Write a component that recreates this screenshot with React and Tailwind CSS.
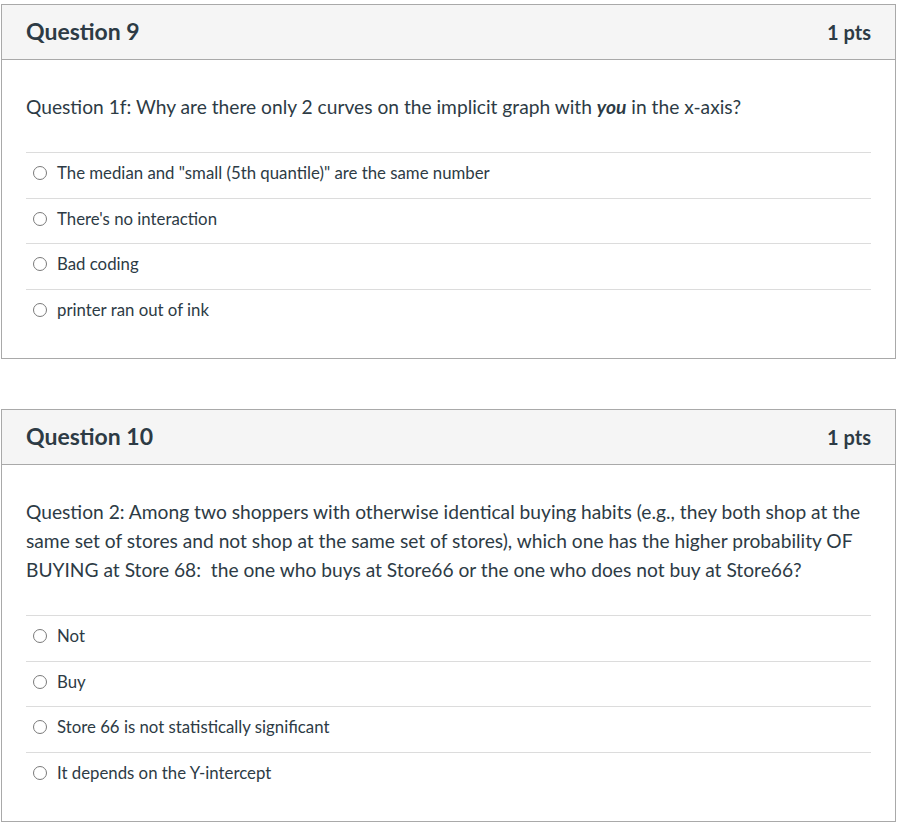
import React from "react";

const questions = [
  {
    title: "Question 9",
    pts: "1 pts",
    text: (
      <>
        Question 1f: Why are there only 2 curves on the implicit graph with{" "}
        <em className="font-bold">you</em> in the x-axis?
      </>
    ),
    answers: [
      'The median and "small (5th quantile)" are the same number',
      "There's no interaction",
      "Bad coding",
      "printer ran out of ink",
    ],
  },
  {
    title: "Question 10",
    pts: "1 pts",
    text: (
      <>
        Question 2: Among two shoppers with otherwise identical buying habits (e.g., they both shop at the
        same set of stores and not shop at the same set of stores), which one has the higher probability OF
        BUYING at Store 68:&nbsp; the one who buys at Store66 or the one who does not buy at Store66?
      </>
    ),
    answers: ["Not", "Buy", "Store 66 is not statistically significant", "It depends on the Y-intercept"],
  },
];

function Question({ q, className }) {
  return (
    <div className={"w-[895px] border border-[#a9a9a9] bg-white " + className}>
      <div className="h-[55px] pb-px px-6 flex items-center justify-between bg-[#f5f5f5] border-b border-[#a9a9a9]">
        <span className="text-[23px] font-bold">{q.title}</span>
        <span className="text-[20px] font-bold">{q.pts}</span>
      </div>
      <div className="px-6 pt-[32px] pb-6">
        <p className="text-[19.2px] leading-[29px] mb-[31px]">{q.text}</p>
        <div>
          {q.answers.map((a) => (
            <div key={a} className="h-[45.5px] border-t border-[#dcdcdc] flex items-start pt-[8px]">
              <div className="flex items-center h-6">
                <span className="ml-[7px] w-[14px] h-[14px] rounded-full border border-[#7a7a7a] bg-white" />
                <span className="ml-[10px] text-[16.8px] leading-6">{a}</span>
              </div>
            </div>
          ))}
        </div>
      </div>
    </div>
  );
}

export default function App() {
  return (
    <div className="min-h-screen bg-white pt-1 pl-px font-['Lato','Open_Sans',sans-serif] text-[#2d3b45]">
      <Question q={questions[0]} />
      <Question q={questions[1]} className="mt-[50px]" />
    </div>
  );
}
